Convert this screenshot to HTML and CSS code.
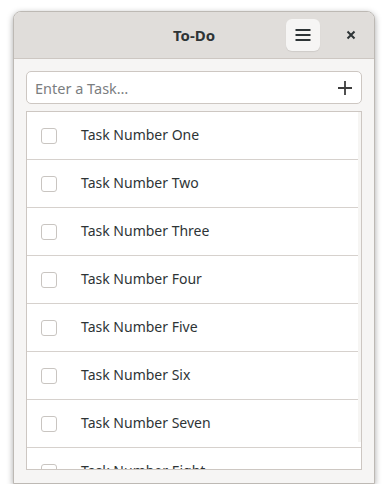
FILE: index.html
```html
<!DOCTYPE html>
<html>
<head>
  <meta charset="UTF-8">
  <meta name="viewport" content="width=device-width, initial-scale=1">
  <title>To-Do</title>
  <link rel="stylesheet" href="styles.css">
</head>
<body>
  <div class="window">
    <div class="header">
      <div class="title">To-Do</div>
      <button class="menu">
        <svg width="16" height="14" viewBox="0 0 16 14">
          <rect x="0.5" y="1" width="15" height="2" fill="#2e3436"/>
          <rect x="0.5" y="6" width="15" height="2" fill="#2e3436"/>
          <rect x="0.5" y="11" width="15" height="2" fill="#2e3436"/>
        </svg>
      </button>
      <button class="close">
        <svg width="10" height="10" viewBox="0 0 10 10">
          <path d="M1.5 1.5 L8.5 8.5 M8.5 1.5 L1.5 8.5" stroke="#2e3436" stroke-width="2"/>
        </svg>
      </button>
    </div>
    <div class="content">
      <div class="entry">
        <span class="placeholder">Enter a Task…</span>
        <svg width="16" height="16" viewBox="0 0 16 16">
          <path d="M8 1 V15 M1 8 H15" stroke="#3d3d3d" stroke-width="1.8"/>
        </svg>
      </div>
      <div class="list">
        <div class="row"><span class="check"></span><span class="label">Task Number One</span></div>
        <div class="row"><span class="check"></span><span class="label">Task Number Two</span></div>
        <div class="row"><span class="check"></span><span class="label">Task Number Three</span></div>
        <div class="row"><span class="check"></span><span class="label">Task Number Four</span></div>
        <div class="row"><span class="check"></span><span class="label">Task Number Five</span></div>
        <div class="row"><span class="check"></span><span class="label">Task Number Six</span></div>
        <div class="row"><span class="check"></span><span class="label">Task Number Seven</span></div>
        <div class="row"><span class="check"></span><span class="label">Task Number Eight</span></div>
        <div class="scrollbar"></div>
      </div>
    </div>
  </div>
</body>
</html>
```
FILE: styles.css
```css
body {
  margin: 0;
  background: #ffffff;
  font-family: "Noto Sans", "Open Sans", sans-serif;
  color: #2e3436;
}
.window {
  margin: 11px 0 0 13px;
  width: 360px;
  height: 471px;
  border: 1px solid #bdb9b4;
  border-radius: 8px 8px 0 0;
  background: #f6f5f4;
  box-shadow: 0 2px 6px rgba(0, 0, 0, 0.35);
  display: flex;
  flex-direction: column;
  overflow: hidden;
}
.header {
  height: 46px;
  flex: none;
  background: #e0ddda;
  border-bottom: 1px solid #cdc7c2;
  display: flex;
  align-items: center;
  position: relative;
}
.title {
  position: absolute;
  left: 0;
  right: 0;
  text-align: center;
  font-weight: bold;
  font-size: 15px;
  pointer-events: none;
}
.menu {
  margin-left: auto;
  width: 34px;
  height: 32px;
  border: none;
  border-radius: 6px;
  background: #f6f5f4;
  box-shadow: 0 1px 1px rgba(0, 0, 0, 0.08);
  display: flex;
  align-items: center;
  justify-content: center;
  padding: 0;
}
.close {
  margin: 0 13px 0 21px;
  width: 20px;
  height: 20px;
  border: none;
  background: none;
  padding: 0;
  display: flex;
  align-items: center;
  justify-content: center;
}
.content {
  flex: 1;
  padding: 12px 12px 13px 12px;
  display: flex;
  flex-direction: column;
  gap: 7px;
  min-height: 0;
}
.entry {
  height: 31px;
  flex: none;
  background: #ffffff;
  border: 1px solid #cdc7c2;
  border-radius: 5px;
  display: flex;
  align-items: center;
  padding: 0 8px 0 8px;
}
.placeholder {
  flex: 1;
  font-size: 14.5px;
  color: #7b7e7f;
}
.list {
  flex: 1;
  min-height: 0;
  background: #ffffff;
  border: 1px solid #cdc7c2;
  overflow: hidden;
  position: relative;
}
.row {
  height: 47px;
  border-bottom: 1px solid #d6d1cd;
  display: flex;
  align-items: center;
}
.check {
  width: 14px;
  height: 14px;
  margin: 0 24px 0 14px;
  border: 1px solid #c9c5c1;
  border-radius: 3px;
  background: #ffffff;
  flex: none;
}
.label {
  font-size: 14px;
  padding-bottom: 2px;
}
.scrollbar {
  position: absolute;
  top: 0;
  right: 0;
  width: 3px;
  height: 330px;
  background: #f6f5f3;
}
```
